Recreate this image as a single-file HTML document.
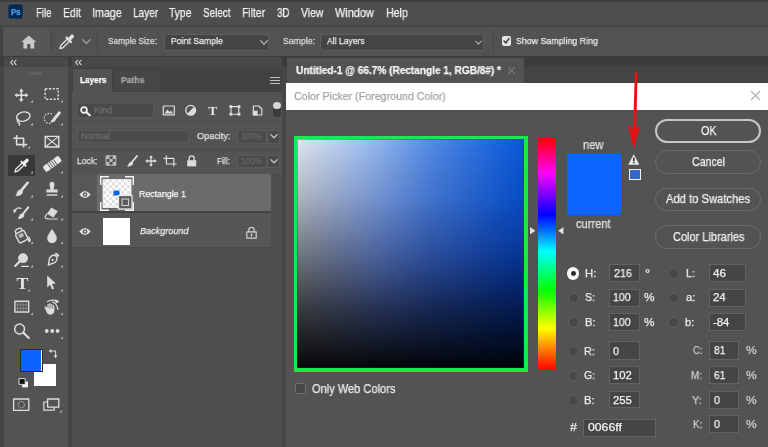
<!DOCTYPE html>
<html><head><meta charset="utf-8"><title>Color Picker</title>
<style>
*{box-sizing:border-box;margin:0;padding:0}
html,body{width:768px;height:447px;overflow:hidden;background:#535353}
body{position:relative;font-family:"Liberation Sans","DejaVu Sans",sans-serif;font-size:11px;color:#e6e6e6}
.a{position:absolute}
.t{position:absolute;white-space:nowrap;line-height:1;transform-origin:0 50%;will-change:transform;-webkit-text-stroke:0.25px}
svg{position:absolute;overflow:visible;will-change:transform}
.i{fill:none;stroke:#dedede;stroke-width:1.45;stroke-linecap:round;stroke-linejoin:round}
.f{fill:#dcdcdc;stroke:none}
</style></head><body>

<div class="a" style="left:0px;top:0px;width:768.0px;height:26.0px;background:#4e4e4e;border-top:2.5px solid #3f3f3f;"></div>
<div class="a" style="left:0px;top:25px;width:768.0px;height:2.0px;background:#454545;"></div>
<div class="a" style="left:7.8px;top:4.2px;width:15.0px;height:14.6px;background:#0a2748;border-radius:3px;border:1px solid #123a6a;"></div>
<span class="t" style="left:11.0px;top:7.7px;font-size:8.5px;color:#48a6ff;font-weight:bold;transform:scaleX(0.895);">Ps</span>
<span class="t" style="left:35.8px;top:6.8px;font-size:12.8px;color:#f2f2f2;transform:scaleX(0.752);">File</span>
<span class="t" style="left:62.5px;top:6.8px;font-size:12.8px;color:#f2f2f2;transform:scaleX(0.816);">Edit</span>
<span class="t" style="left:92.0px;top:6.8px;font-size:12.8px;color:#f2f2f2;transform:scaleX(0.838);">Image</span>
<span class="t" style="left:132.8px;top:6.8px;font-size:12.8px;color:#f2f2f2;transform:scaleX(0.787);">Layer</span>
<span class="t" style="left:169.0px;top:6.8px;font-size:12.8px;color:#f2f2f2;transform:scaleX(0.804);">Type</span>
<span class="t" style="left:203.3px;top:6.8px;font-size:12.8px;color:#f2f2f2;transform:scaleX(0.773);">Select</span>
<span class="t" style="left:242.0px;top:6.8px;font-size:12.8px;color:#f2f2f2;transform:scaleX(0.809);">Filter</span>
<span class="t" style="left:276.5px;top:6.8px;font-size:12.8px;color:#f2f2f2;transform:scaleX(0.764);">3D</span>
<span class="t" style="left:301.0px;top:6.8px;font-size:12.8px;color:#f2f2f2;transform:scaleX(0.814);">View</span>
<span class="t" style="left:334.6px;top:6.8px;font-size:12.8px;color:#f2f2f2;transform:scaleX(0.852);">Window</span>
<span class="t" style="left:386.0px;top:6.8px;font-size:12.8px;color:#f2f2f2;transform:scaleX(0.828);">Help</span>
<div class="a" style="left:0px;top:27px;width:768.0px;height:29.0px;background:#525252;"></div>
<div class="a" style="left:0px;top:27px;width:3.0px;height:29.0px;background:#424242;"></div>
<div class="a" style="left:3.5px;top:29px;width:46.5px;height:25.5px;background:#565656;border-radius:3px;"></div>
<svg style="left:21.3px;top:34.6px" width="15.6" height="14" viewBox="0 0 15 14" preserveAspectRatio="none"><path d="M7.5 0.5 L0.3 7 H2.3 V13.5 H6 V9 H9 V13.5 H12.7 V7 H14.7 Z" class="f" style="fill:#c8c8c8"/></svg>
<div class="a" style="left:50.5px;top:30px;width:1.0px;height:23.0px;background:#464646;"></div>
<svg style="left:58px;top:33px" width="18" height="17" viewBox="0 0 18 17"><path d="M2 15.5 L2.8 12.6 L9.6 5.8 L11.8 8 L5 14.8 Z" class="i" style="stroke-width:1.4"/><path d="M8.6 4.6 L13 9" class="i" style="stroke-width:2.2"/><path d="M11.2 6.4 L14.2 3.2" class="i" style="stroke-width:3.6"/></svg>
<svg style="left:82px;top:39px" width="9" height="6" viewBox="0 0 9 6"><path d="M0.8 0.8 L4.5 4.5 L8.2 0.8" class="i" style="stroke:#9a9a9a;stroke-width:1.4"/></svg>
<div class="a" style="left:97px;top:30px;width:1.0px;height:23.0px;background:#464646;"></div>
<span class="t" style="left:108.0px;top:36.4px;font-size:9.9px;color:#dedede;transform:scaleX(0.841);">Sample Size:</span>
<div class="a" style="left:163.5px;top:33.5px;width:105.5px;height:17.0px;background:#454545;border:1px solid #5e5e5e;border-radius:2px;"></div>
<span class="t" style="left:170.5px;top:36.4px;font-size:9.9px;color:#ececec;transform:scaleX(0.884);">Point Sample</span>
<svg style="left:260px;top:40px" width="8" height="6" viewBox="0 0 8 6"><path d="M0.8 0.8 L4 4.2 L7.2 0.8" class="i" style="stroke:#a8a8a8;stroke-width:1.4"/></svg>
<span class="t" style="left:282.6px;top:36.4px;font-size:9.9px;color:#dedede;transform:scaleX(0.885);">Sample:</span>
<div class="a" style="left:319.5px;top:33.5px;width:164.5px;height:17.0px;background:#454545;border:1px solid #5e5e5e;border-radius:2px;"></div>
<span class="t" style="left:327.0px;top:36.4px;font-size:9.9px;color:#ececec;transform:scaleX(0.866);">All Layers</span>
<svg style="left:475px;top:40px" width="7" height="6" viewBox="0 0 8 6"><path d="M0.8 0.8 L4 4.2 L7.2 0.8" class="i" style="stroke:#a8a8a8;stroke-width:1.4"/></svg>
<div class="a" style="left:492.5px;top:30px;width:1.0px;height:23.0px;background:#464646;"></div>
<div class="a" style="left:501.5px;top:36px;width:9.0px;height:9.5px;background:#e4e4e4;border-radius:2px;"></div>
<svg style="left:502.5px;top:37px" width="7" height="8" viewBox="0 0 7 8"><path d="M1 4 L2.8 6 L6 1.6" class="i" style="stroke:#3c3c3c;stroke-width:1.5"/></svg>
<span class="t" style="left:516.0px;top:36.4px;font-size:9.9px;color:#ececec;transform:scaleX(0.893);">Show Sampling Ring</span>
<div class="a" style="left:0px;top:56px;width:768.0px;height:391.0px;background:#464646;"></div>
<div class="a" style="left:0px;top:56px;width:768.0px;height:1.0px;background:#383838;"></div>
<div class="a" style="left:0px;top:56px;width:768.0px;height:10.0px;background:#3c3c3c;"></div>
<div class="a" style="left:286px;top:66px;width:482.0px;height:16.5px;background:#444444;"></div>
<div class="a" style="left:3.5px;top:57px;width:64.5px;height:390.0px;background:#535353;"></div>
<div class="a" style="left:3.5px;top:57px;width:64.5px;height:10.0px;background:#484848;"></div>
<svg style="left:10px;top:60px" width="7" height="5" viewBox="0 0 7 5"><path d="M2.6 0.3 L0.6 2.5 L2.6 4.7 M6 0.3 L4 2.5 L6 4.7" class="i" style="stroke:#e0e0e0;stroke-width:1.1"/></svg>
<div class="a" style="left:29px;top:71.5px;width:13.0px;height:3.5px;background:#5e5e5e;"></div>
<div class="a" style="left:7.5px;top:154.5px;width:27.5px;height:21.5px;background:#383838;"></div>
<svg style="left:0;top:0" width="72" height="447" viewBox="0 0 72 447">
<g class="i">
<!-- move -->
<path d="M21.3 90 V100.8 M15.6 95.3 H27 " style="stroke-width:1.5"/>
<path class="f" d="M21.3 88.6 L23.6 91.6 H19 Z M21.3 102 L23.6 99 H19 Z M14.4 95.3 L17.4 93 V97.6 Z M28.4 95.3 L25.4 93 V97.6 Z"/>
<!-- marquee -->
<rect x="45.2" y="88.8" width="13" height="10.4" style="stroke-dasharray:2.2 1.5;stroke-linecap:butt;stroke-width:1.4"/>
<!-- lasso -->
<ellipse cx="23.3" cy="116.6" rx="6.8" ry="4.6" transform="rotate(-12 23.3 116.6)" style="stroke-width:1.4"/>
<path d="M18.2 119.6 Q16.4 121.3 18.6 122.6 Q20.2 123.6 19.2 125"/>
<!-- quick select -->
<path d="M50.5 123.2 A5 5 0 1 1 52 114.2" style="stroke-dasharray:1.6 1.4;stroke-width:1.2;stroke-linecap:butt"/>
<path d="M59.4 112.8 L54.6 118.4" style="stroke-width:3"/>
<path class="f" d="M54.6 118.2 Q51.4 118.6 50.6 122.6 Q54.6 122.8 56 119.6 Z"/>
<!-- crop -->
<path d="M16.6 135 V144.6 H27.2 M13.2 138.2 H23.6 V147.6" style="stroke-width:1.6;stroke-linecap:butt"/>
<!-- frame -->
<rect x="45.2" y="136.4" width="13.6" height="10.6" style="stroke-width:1.4"/>
<path d="M45.2 136.4 L58.8 147 M58.8 136.4 L45.2 147" style="stroke-width:1.1"/>
<!-- eyedropper (selected) -->
<path d="M15 172 L15.8 169.2 L22.4 162.6 L24.4 164.6 L17.8 171.2 Z" style="stroke-width:1.3;stroke:#f0f0f0"/>
<path d="M21.4 161.6 L25.6 165.8" style="stroke-width:2;stroke:#f0f0f0"/>
<path d="M24 163.2 L27 160.4" style="stroke-width:3.4;stroke:#f0f0f0"/>
<!-- healing -->
<g transform="rotate(-36 52.2 164)"><rect x="42.600" y="160.600" width="19.400" height="6.800" rx="1.800" class="f" style="fill:#e6e6e6"/><path d="M48.600 160.600 V167.400 M51 160.600 V167.400 M53.400 160.600 V167.400 M55.800 160.600 V167.400" style="stroke:#555;stroke-width:0.900;stroke-linecap:butt"/></g>
<!-- brush -->
<path d="M27.600 182.800 L21.400 190.400" style="stroke-width:2.600"/>
<path class="f" d="M20.8 189.6 Q17.4 190 16.8 193.2 Q16.4 194.8 15.2 195.6 Q19.8 196.8 22.4 193.4 Q23.4 191.6 22.6 190.6 Z"/>
<!-- stamp -->
<path class="f" d="M49.6 185 A2.5 2.5 0 1 1 54.4 185 L53.6 189.6 H57.6 V192.6 H46.4 V189.6 H50.4 Z"/>
<path d="M46.6 195 H57.4" style="stroke-width:1.4;stroke-linecap:butt"/>
<!-- history brush -->
<path d="M28.2 207.4 L23 213.8" style="stroke-width:2"/>
<path class="f" d="M22.6 213.2 Q19.6 213.6 19 216.2 Q18.6 217.8 17.4 218.6 Q21.4 219.8 23.8 216.8 Q24.8 215 24 214 Z"/>
<path d="M14.4 211.6 A4.6 4.6 0 0 1 21 208.4" style="stroke-width:1.2"/>
<path class="f" d="M13.2 209.6 L16.6 210.6 L14 213.4 Z"/>
<!-- eraser -->
<path class="f" d="M51.4 207.6 L57.8 211.2 L53.4 217.4 L47 213.8 Z"/>
<path d="M47 213.8 L45.2 216.6 Q45 218.8 48 219 H57.4" style="stroke-width:1.2"/>
<!-- bucket -->
<g transform="rotate(-28 22 236)"><rect x="16.6" y="231.4" width="9.6" height="10" rx="1.6" style="stroke-width:1.4"/><path d="M18 231.4 V228.6 Q21.4 226.6 24.8 228.6 V231.4" style="stroke-width:1.2"/><rect x="19" y="233.4" width="4.8" height="3.6" class="f" style="fill:#bdbdbd"/></g>
<path class="f" d="M28.6 236 Q31.4 239.4 30.6 241.4 Q29.4 242.8 28 241.4 Q27.4 239.6 28.6 236 Z"/>
<!-- blur drop -->
<path class="f" d="M52 229 Q56.8 235.6 56.8 238.4 A4.8 4.8 0 0 1 47.200 238.400 Q47.2 235.600 52 229 Z"/>
<!-- dodge -->
<circle cx="23" cy="258.2" r="4.900" class="f"/>
<path d="M19.4 261.8 L15.200 266" style="stroke-width:2.2"/>
<path d="M21.600 266.400 H28.400" style="stroke-width:1.100"/>
<!-- pen -->
<g transform="rotate(40 52.5 260)"><path d="M52.500 266.500 L48.900 260.200 Q48.700 256.800 50.700 255 H54.300 Q56.300 256.800 56.100 260.200 Z" style="stroke-width:1.400"/><path d="M50.300 253 H54.700" style="stroke-width:2.200;stroke-linecap:butt"/><circle cx="52.500" cy="259.800" r="1.100" class="f"/></g>
<!-- path select arrow -->
<path class="f" d="M47.200 275.600 V287.400 L50 284.800 L52.200 289.400 L54.200 288.400 L52 284 L55.800 283.600 Z"/>
<!-- rectangle tool -->
<rect x="14.900" y="301.200" width="13.800" height="10.800" style="stroke-width:1.400"/>
<path d="M17.600 301.200 V312 M20.400 301.200 V312 M23.200 301.200 V312 M26 301.200 V312 M14.900 304.800 H28.700 M14.900 308.400 H28.700" style="stroke-width:0.500;stroke:#a8a8a8"/>
<!-- hand -->
<path class="f" d="M45.4 309.2 Q43.800 307.200 45 306.600 Q46.200 306.200 47.400 308 V304.600 Q48 303.400 49 304.600 V303.800 Q49.800 302.800 50.800 303.800 V304.200 Q51.600 303.400 52.600 304.400 V305.200 Q53.600 304.600 54.400 305.800 V310.600 Q54.200 314.400 50.600 314.800 Q47.600 314.800 46.600 312 Z"/>
<path d="M49 305 V308 M50.800 304.600 V308 M52.600 305.200 V308" style="stroke:#535353;stroke-width:0.600"/>
<path d="M47.600 301.600 Q52 298.800 56.400 301" style="stroke-width:1.200"/>
<path d="M52.600 302 Q57 303.400 57.800 309.400" style="stroke-width:1.300"/>
<path class="f" d="M55.400 299.200 L59.600 301.400 L55.600 303.400 Z"/>
<!-- zoom -->
<circle cx="19.600" cy="329" r="4.900" style="stroke-width:1.500"/>
<path d="M23.400 332.800 L28.800 338" style="stroke-width:2.200"/>
<!-- dots -->
<circle cx="46.800" cy="331" r="1.900" class="f"/><circle cx="52.200" cy="331" r="1.900" class="f"/><circle cx="57.600" cy="331" r="1.900" class="f"/>
<!-- swap -->
<path d="M51 351 H55.600 V356.400" style="stroke-width:1.100"/>
<path class="f" d="M48.600 351 L51.400 349 V353 Z M55.600 358.200 L53.600 355.400 H57.600 Z"/>
<!-- default colours -->
<rect x="22.200" y="381.600" width="5.800" height="5.800" fill="#f4f4f4" stroke="none"/>
<rect x="19.400" y="378.600" width="5.800" height="5.800" fill="#111" stroke="#e8e8e8" stroke-width="0.900"/>
<!-- quick mask -->
<rect x="13.600" y="399" width="15.200" height="11.400" style="stroke-width:1.300"/>
<circle cx="21.200" cy="404.700" r="3.200" style="stroke-width:1;stroke-dasharray:1.300 1.100;stroke-linecap:butt"/>
<!-- screen mode -->
<rect x="43.800" y="402" width="10.400" height="8.200" style="stroke-width:1.200"/>
<rect x="47.600" y="399" width="11.200" height="8.200" fill="#535353" style="fill:#535353;stroke-width:1.300"/>
</g>
<!-- type T -->
<text x="16.400" y="289.400" font-family="Liberation Serif, serif" font-size="17" font-weight="bold" fill="#e4e4e4" transform="translate(16.400 0) scale(1.050 1) translate(-16.400 0)">T</text>
<!-- corner triangles -->
<g fill="#b4b4b4">
<path d="M33 100 V102.600 H30.400 Z M63 100 V102.600 H60.400 Z M33 123 V125.600 H30.400 Z M63 123 V125.600 H60.400 Z M30 146 V148.600 H27.400 Z
M33 171 V173.600 H30.400 Z M63 171 V173.600 H60.400 Z M33 195 V197.600 H30.400 Z M63 195 V197.600 H60.400 Z M33 218 V220.600 H30.400 Z M63 218 V220.600 H60.400 Z
M33 241.500 V244.100 H30.400 Z M63 241.500 V244.100 H60.400 Z M33 265 V267.600 H30.400 Z M63 265 V267.600 H60.400 Z M30 289 V291.600 H27.400 Z M63 289 V291.600 H60.400 Z
M33 312.500 V315.100 H30.400 Z M63 312.500 V315.100 H60.400 Z M63 336.500 V339.100 H60.400 Z M62 410 V412.600 H59.400 Z"/>
</g>
</svg>

<div class="a" style="left:33.8px;top:364px;width:22.2px;height:22.0px;background:#fff;"></div>
<div class="a" style="left:19.5px;top:349px;width:23.0px;height:23.0px;background:#fff;border:1px solid #2a2a2a;"></div>
<div class="a" style="left:20.8px;top:350.3px;width:20.4px;height:20.4px;background:#0c64ff;"></div>
<div class="a" style="left:72px;top:57px;width:210.0px;height:390.0px;background:#535353;"></div>
<div class="a" style="left:72px;top:57px;width:210.0px;height:10.0px;background:#484848;"></div>
<svg style="left:75px;top:60px" width="7" height="5" viewBox="0 0 7 5"><path d="M2.6 0.3 L0.6 2.5 L2.6 4.7 M6 0.3 L4 2.5 L6 4.7" class="i" style="stroke:#e0e0e0;stroke-width:1.1"/></svg>
<div class="a" style="left:72px;top:67px;width:210.0px;height:25.0px;background:#424242;"></div>
<div class="a" style="left:73px;top:69px;width:38.5px;height:23.0px;background:#535353;"></div>
<div class="a" style="left:113.5px;top:70px;width:46.5px;height:21.0px;background:#474747;"></div>
<span class="t" style="left:79.5px;top:75.0px;font-size:9.9px;color:#fff;font-weight:bold;transform:scaleX(0.831);">Layers</span>
<span class="t" style="left:121.0px;top:75.0px;font-size:9.9px;color:#a4a4a4;font-weight:bold;transform:scaleX(0.873);">Paths</span>
<div class="a" style="left:270px;top:76.5px;width:9.7px;height:1.3px;background:#bdbdbd;box-shadow:0 3px 0 #bdbdbd,0 6px 0 #bdbdbd;"></div>
<div class="a" style="left:76.5px;top:102.5px;width:77.0px;height:15.0px;background:#494949;border:1px solid #575757;"></div>
<svg style="left:80px;top:105.5px" width="11" height="10" viewBox="0 0 11 10"><circle cx="4" cy="4" r="2.9" class="i" style="stroke:#f0f0f0;stroke-width:1.7"/><path d="M6.4 6.2 L9.8 9.2" class="i" style="stroke:#f0f0f0;stroke-width:2.2"/></svg>
<span class="t" style="left:94.0px;top:105.4px;font-size:9.9px;color:#707070;transform:scaleX(0.909);">Kind</span>
<svg style="left:0;top:0" width="290" height="250" viewBox="0 0 290 250">
<g class="i">
<!-- filter: image -->
<rect x="163.300" y="106" width="11" height="8.800" style="stroke-width:1.200"/>
<path class="f" d="M164.600 113.400 L167.400 109.600 L169.400 112 L171 110.400 L173.200 113.400 Z"/>
<!-- adjustment circle -->
<circle cx="190.700" cy="110.300" r="4.900" style="stroke-width:1.300"/>
<path class="f" d="M187.200 113.800 A4.900 4.900 0 0 0 194.200 106.800 Z"/>
<!-- transform box -->
<rect x="231" y="106.600" width="7.800" height="7.600" style="stroke-width:1.100"/>
<rect x="229.400" y="105.200" width="2.800" height="2.800" class="f"/><rect x="237.600" y="105.200" width="2.800" height="2.800" class="f"/><rect x="229.400" y="112.800" width="2.800" height="2.800" class="f"/><rect x="237.600" y="112.800" width="2.800" height="2.800" class="f"/>
<!-- smart object -->
<path d="M253.400 115 V106 H258.800 L261.800 109 V115 Z" style="stroke-width:1.200"/>
<rect x="252.800" y="110.800" width="4.800" height="4.600" class="f"/>
<!-- lock: transparent pixels -->
<rect x="106.400" y="155.800" width="9.400" height="9.400" style="stroke-width:1;stroke:#bdbdbd"/>
<path class="f" style="fill:#bdbdbd" d="M106.400 155.800 h3.100 v3.100 h-3.100 Z M112.700 155.800 h3.100 v3.100 h-3.100 Z M109.500 158.900 h3.200 v3.200 h-3.200 Z M106.400 162.100 h3.100 v3.100 h-3.100 Z M112.700 162.100 h3.100 v3.100 h-3.100 Z"/>
<!-- lock: brush -->
<path d="M137 156 L132 162" style="stroke-width:1.800"/>
<path class="f" d="M131.600 161.400 Q128.800 161.800 128.400 164.200 Q128.200 165.400 127 166.200 Q130.800 167 132.800 164.400 Q133.600 163 132.800 162.200 Z"/>
<!-- lock: move -->
<path d="M151 156.600 V165.400 M146.600 161 H155.400" style="stroke-width:1.300"/>
<path class="f" d="M151 155.200 L153 157.800 H149 Z M151 166.800 L153 164.200 H149 Z M145.200 161 L147.800 159 V163 Z M156.800 161 L154.200 159 V163 Z"/>
<!-- lock: artboard -->
<path d="M166.400 155.600 V164 H176.600 M163.600 158.400 H173.800 V166.600" style="stroke-width:1.200;stroke-linecap:butt"/>
<!-- lock: all -->
<rect x="187.200" y="160.200" width="9" height="6.200" class="f"/>
<path d="M189.200 160 V158.400 A2.500 2.500 0 0 1 194.200 158.400 V160" style="stroke-width:1.300"/>
</g>
<text x="208.200" y="115.200" font-family="Liberation Serif, serif" font-size="13.5" font-weight="bold" fill="#e4e4e4">T</text>
</svg>

<div class="a" style="left:273px;top:102px;width:8.0px;height:15.0px;background:#3c3c3c;border-radius:3px;"></div>
<div class="a" style="left:273.3px;top:102px;width:7.4px;height:7.2px;background:#d8d8d8;border-radius:50%;"></div>
<div class="a" style="left:72px;top:121px;width:210.0px;height:1.0px;background:#4a4a4a;"></div>
<div class="a" style="left:76.5px;top:129.5px;width:112.5px;height:13.5px;background:#4c4c4c;border:1px solid #595959;"></div>
<span class="t" style="left:80.8px;top:130.8px;font-size:9.9px;color:#6e6e6e;transform:scaleX(0.904);">Normal</span>
<span class="t" style="left:197.0px;top:130.8px;font-size:9.9px;color:#e0e0e0;transform:scaleX(0.923);">Opacity:</span>
<div class="a" style="left:236.5px;top:129.5px;width:30.0px;height:14.0px;background:#4a4a4a;border:1px solid #5a5a5a;"></div>
<span class="t" style="left:241.0px;top:131.0px;font-size:9.6px;color:#686868;transform:scaleX(0.856);">100%</span>
<div class="a" style="left:267px;top:129.5px;width:13.0px;height:14.0px;background:#4a4a4a;border:1px solid #5a5a5a;"></div>
<svg style="left:269.5px;top:134px" width="8" height="5" viewBox="0 0 8 5"><path d="M0.8 0.6 L4 3.8 L7.2 0.6" class="i" style="stroke:#c8c8c8;stroke-width:1.3"/></svg>
<div class="a" style="left:72px;top:149px;width:210.0px;height:1.0px;background:#494949;"></div>
<span class="t" style="left:76.5px;top:156.2px;font-size:9.9px;color:#e0e0e0;transform:scaleX(0.867);">Lock:</span>
<span class="t" style="left:217.0px;top:156.2px;font-size:9.9px;color:#e0e0e0;transform:scaleX(0.845);">Fill:</span>
<div class="a" style="left:236.5px;top:154.5px;width:30.0px;height:13.5px;background:#4a4a4a;border:1px solid #5a5a5a;"></div>
<span class="t" style="left:241.0px;top:156.2px;font-size:9.6px;color:#686868;transform:scaleX(0.856);">100%</span>
<div class="a" style="left:267px;top:154.5px;width:13.0px;height:13.5px;background:#4a4a4a;border:1px solid #5a5a5a;"></div>
<svg style="left:269.5px;top:159px" width="8" height="5" viewBox="0 0 8 5"><path d="M0.8 0.6 L4 3.8 L7.2 0.6" class="i" style="stroke:#c8c8c8;stroke-width:1.3"/></svg>
<div class="a" style="left:72px;top:174px;width:199.0px;height:37.0px;background:#575757;"></div>
<div class="a" style="left:97px;top:174px;width:174.0px;height:37.0px;background:#6b6b6b;"></div>
<div class="a" style="left:72px;top:211px;width:199.0px;height:1.5px;background:#434343;"></div>
<div class="a" style="left:72px;top:212.5px;width:199.0px;height:34.5px;background:#565656;"></div>
<div class="a" style="left:72px;top:247px;width:199.0px;height:1.0px;background:#494949;"></div>
<div class="a" style="left:72px;top:248px;width:199.0px;height:199.0px;background:#4f4f4f;"></div>
<div class="a" style="left:271px;top:174px;width:11.0px;height:273.0px;background:#4e4e4e;"></div>
<svg style="left:79px;top:189.5px" width="12" height="9" viewBox="0 0 12 9"><path d="M0.3 4.5 Q6 -2.5 11.7 4.5 Q6 11.5 0.3 4.5 Z" class="f" style="fill:#e4e4e4"/><circle cx="6" cy="4.5" r="2.3" fill="#555"/><circle cx="6" cy="4.5" r="1" fill="#e4e4e4"/></svg>
<svg style="left:79px;top:227px" width="12" height="9" viewBox="0 0 12 9"><path d="M0.3 4.5 Q6 -2.5 11.7 4.5 Q6 11.5 0.3 4.5 Z" class="f" style="fill:#e4e4e4"/><circle cx="6" cy="4.5" r="2.3" fill="#555"/><circle cx="6" cy="4.5" r="1" fill="#e4e4e4"/></svg>
<svg style="left:100px;top:176px" width="34" height="35" viewBox="0 0 34 35">
<defs><pattern id="ck" width="6" height="6" patternUnits="userSpaceOnUse"><rect width="6" height="6" fill="#fff"/><rect width="3" height="3" fill="#e0e0e0"/><rect x="3" y="3" width="3" height="3" fill="#e0e0e0"/></pattern></defs>
<rect x="3" y="3.5" width="28" height="28" fill="url(#ck)"/>
<path d="M0.7 9 V0.7 H9 M25 0.7 H33.3 V9 M33.3 26 V34.3 H25 M9 34.3 H0.7 V26" fill="none" stroke="#f4f4f4" stroke-width="1.4"/>
<path d="M3 3.5 H31 V31.5 H3 Z" fill="none" stroke="#f0f0f0" stroke-width="0.9"/>
<rect x="13.3" y="14.5" width="6.3" height="5" rx="1.5" fill="#0a62f5"/>
<rect x="18.5" y="19.5" width="13.5" height="13.5" fill="#5a5a5a" stroke="#e6e6e6" stroke-width="1.3"/>
<rect x="22" y="23" width="6.5" height="6.5" fill="none" stroke="#cfcfcf" stroke-width="1.1"/>
</svg>
<span class="t" style="left:139.0px;top:189.0px;font-size:9.9px;color:#fafafa;transform:scaleX(0.890);">Rectangle 1</span>
<div class="a" style="left:102.6px;top:218px;width:27.4px;height:26.7px;background:#fff;"></div>
<span class="t" style="left:140.0px;top:226.1px;font-size:9.9px;color:#efefef;font-style:italic;transform:scaleX(0.919);">Background</span>
<svg style="left:245.5px;top:226.5px" width="11" height="12" viewBox="0 0 11 12"><rect x="0.8" y="4.8" width="9.4" height="6.4" class="i" style="stroke:#cfcfcf;stroke-width:1.2"/><path d="M2.8 4.8 V3 A2.7 2.7 0 0 1 8.2 3 V4.8" class="i" style="stroke:#cfcfcf;stroke-width:1.2"/><path d="M5.5 7 V9" class="i" style="stroke:#cfcfcf;stroke-width:1.4"/></svg>
<div class="a" style="left:287px;top:58px;width:237.0px;height:24.5px;background:#535353;"></div>
<span class="t" style="left:296.0px;top:65.5px;font-size:10.3px;color:#f6f6f6;font-weight:bold;transform:scaleX(0.977);">Untitled-1 @ 66.7% (Rectangle 1, RGB/8#) *</span>
<svg style="left:508px;top:66.5px" width="7" height="7" viewBox="0 0 7 7"><path d="M0.5 0.5 L6.5 6.5 M6.5 0.5 L0.5 6.5" class="i" style="stroke:#8c8c8c;stroke-width:1"/></svg>
<div class="a" style="left:286px;top:82.5px;width:482.0px;height:364.5px;background:#535353;"></div>
<div class="a" style="left:285.5px;top:82.5px;width:482.5px;height:27.5px;background:#fff;"></div>
<span class="t" style="left:293.5px;top:90.9px;font-size:11.5px;color:#a2a2a2;transform:scaleX(0.928);">Color Picker (Foreground Color)</span>
<svg style="left:751px;top:91px" width="9" height="9" viewBox="0 0 9 9"><path d="M0.4 0.4 L8.6 8.6 M8.6 0.4 L0.4 8.6" class="i" style="stroke:#a4a4a4;stroke-width:1.1"/></svg>
<div class="a" style="left:293.6px;top:135.9px;width:234.2px;height:236.0px;background:#14ec4a;"></div>
<div class="a" style="left:297.1px;top:139.4px;width:227.3px;height:229px;background:linear-gradient(to bottom,rgba(0,0,0,0.03) 0%,rgba(0,0,0,0.24) 25%,rgba(0,0,0,0.5) 50%,rgba(0,0,0,0.76) 75%,rgba(0,0,0,0.97) 100%),linear-gradient(to right,rgb(232,238,250) 0%,rgb(165,197,250) 30%,rgb(84,142,240) 60%,rgb(24,102,232) 90%,rgb(10,90,224) 100%);box-shadow:inset 0 0 0 1px rgba(40,50,80,0.35)"></div>
<div class="a" style="left:297.1px;top:139.4px;width:227.3px;height:229px;mix-blend-mode:screen;background:linear-gradient(to right,rgba(0,36,255,0) 0%,rgba(0,36,255,1) 38%,rgba(0,36,255,1) 100%);-webkit-mask-image:linear-gradient(to bottom,rgba(0,0,0,0) 0%,rgba(0,0,0,.3) 25%,rgba(0,0,0,.26) 50%,rgba(0,0,0,.11) 75%,rgba(0,0,0,0) 100%);mask-image:linear-gradient(to bottom,rgba(0,0,0,0) 0%,rgba(0,0,0,.3) 25%,rgba(0,0,0,.26) 50%,rgba(0,0,0,.11) 75%,rgba(0,0,0,0) 100%)"></div>
<div class="a" style="left:538px;top:138px;width:17.5px;height:232.4px;background:linear-gradient(to bottom,#f00 0%,#f0f 15.2%,#00f 33%,#0ff 48.8%,#0f0 65.6%,#ff0 82%,#f00 100%)"></div>
<svg style="left:530px;top:227.3px" width="5.5" height="7.5" viewBox="0 0 5.5 7.5"><path d="M0 0 L5.5 3.75 L0 7.5 Z" fill="#e2e2e2" stroke="#3a3a3a" stroke-width="0.8" paint-order="stroke"/></svg>
<svg style="left:557.7px;top:227.3px" width="5.5" height="7.5" viewBox="0 0 5.5 7.5"><path d="M5.5 0 L0 3.75 L5.5 7.5 Z" fill="#e2e2e2" stroke="#3a3a3a" stroke-width="0.8" paint-order="stroke"/></svg>
<span class="t" style="left:582.8px;top:139.0px;font-size:12px;color:#e2e2e2;transform:scaleX(0.931);">new</span>
<div class="a" style="left:566.5px;top:153.2px;width:54.5px;height:62.0px;background:#0a66ff;"></div>
<span class="t" style="left:575.8px;top:217.5px;font-size:12px;color:#e2e2e2;transform:scaleX(0.924);">current</span>
<svg style="left:628.4px;top:154px" width="11.6" height="11" viewBox="0 0 11.6 11"><path d="M5.8 0.3 L11.4 10.7 H0.2 Z" fill="#ededed"/><path d="M5.8 3.6 V7.2 M5.8 8.3 V9.6" stroke="#383838" stroke-width="1.7" fill="none"/></svg>
<div class="a" style="left:629.3px;top:168.6px;width:11.4px;height:11.4px;background:#3467cc;border:1.2px solid #f0f0f0;"></div>
<svg style="left:620px;top:70px" width="30" height="85" viewBox="0 0 30 85"><path d="M16.2 2.5 L14.6 62" stroke="#e51212" stroke-width="2.9" fill="none"/><path d="M8.2 55 L13.8 77.5 L19.8 55.5 L14.2 61 Z" fill="#e51212" stroke="#e51212" stroke-width="0.8" stroke-linejoin="round"/></svg>
<div class="a" style="left:655.2px;top:118.8px;width:105.8px;height:24.0px;background:transparent;border:2px solid #c6c6c6;border-radius:13px;"></div>
<span class="t" style="left:700.7px;top:125.4px;font-size:12.3px;color:#f2f2f2;transform:scaleX(0.878);">OK</span>
<div class="a" style="left:655.2px;top:150px;width:105.8px;height:23.8px;background:transparent;border:1.3px solid #6c6c6c;border-radius:13px;"></div>
<span class="t" style="left:691.7px;top:156.0px;font-size:12.3px;color:#f2f2f2;transform:scaleX(0.862);">Cancel</span>
<div class="a" style="left:655.2px;top:187.8px;width:105.8px;height:23.2px;background:transparent;border:1.3px solid #6c6c6c;border-radius:13px;"></div>
<span class="t" style="left:666.2px;top:193.4px;font-size:12.3px;color:#f2f2f2;transform:scaleX(0.911);">Add to Swatches</span>
<div class="a" style="left:655.2px;top:225.3px;width:105.8px;height:23.5px;background:transparent;border:1.3px solid #6c6c6c;border-radius:13px;"></div>
<span class="t" style="left:672.7px;top:231.2px;font-size:12.3px;color:#f2f2f2;transform:scaleX(0.894);">Color Libraries</span>
<div class="a" style="left:295px;top:382.6px;width:11.3px;height:11.8px;background:#484848;border:1px solid #707070;border-radius:2px;"></div>
<span class="t" style="left:312.0px;top:382.6px;font-size:12px;color:#ececec;transform:scaleX(0.921);">Only Web Colors</span>
<div class="a" style="left:567.0999999999999px;top:267.2px;width:12.4px;height:12.4px;background:#f4f4f4;border-radius:50%;"></div>
<div class="a" style="left:570.9px;top:271.0px;width:4.8px;height:4.8px;background:#2c2c2c;border-radius:50%;"></div>
<span class="t" style="left:584.5px;top:267.6px;font-size:11.3px;color:#ececec;transform:scaleX(1.000);">H:</span>
<div class="a" style="left:608.5px;top:264px;width:31.0px;height:18.0px;background:#454545;border:1px solid #626262;"></div>
<span class="t" style="left:614.0px;top:267.6px;font-size:11.3px;color:#f4f4f4;transform:scaleX(0.955);">216</span>
<span class="t" style="left:645.3px;top:268.1px;font-size:11.3px;color:#ececec;transform:scaleX(1.151);">°</span>
<div class="a" style="left:567.9px;top:292.6px;width:10.8px;height:10.8px;background:#484848;border-radius:50%;border:1.2px solid #606060;"></div>
<span class="t" style="left:584.5px;top:292.2px;font-size:11.3px;color:#ececec;transform:scaleX(0.946);">S:</span>
<div class="a" style="left:608.5px;top:289px;width:31.0px;height:17.5px;background:#454545;border:1px solid #626262;"></div>
<span class="t" style="left:612.7px;top:292.2px;font-size:11.3px;color:#f4f4f4;transform:scaleX(0.939);">100</span>
<span class="t" style="left:643.5px;top:292.2px;font-size:11.3px;color:#ececec;transform:scaleX(1.045);">%</span>
<div class="a" style="left:567.9px;top:317.3px;width:10.8px;height:10.8px;background:#484848;border-radius:50%;border:1.2px solid #606060;"></div>
<span class="t" style="left:584.5px;top:316.9px;font-size:11.3px;color:#ececec;transform:scaleX(0.984);">B:</span>
<div class="a" style="left:608.5px;top:313px;width:31.0px;height:18.0px;background:#454545;border:1px solid #626262;"></div>
<span class="t" style="left:612.7px;top:316.9px;font-size:11.3px;color:#f4f4f4;transform:scaleX(0.939);">100</span>
<span class="t" style="left:643.5px;top:316.9px;font-size:11.3px;color:#ececec;transform:scaleX(1.045);">%</span>
<div class="a" style="left:567.9px;top:346.0px;width:10.8px;height:10.8px;background:#484848;border-radius:50%;border:1.2px solid #606060;"></div>
<span class="t" style="left:584.3px;top:345.6px;font-size:11.3px;color:#ececec;transform:scaleX(0.947);">R:</span>
<div class="a" style="left:608.5px;top:341.3px;width:31.0px;height:18.7px;background:#454545;border:1px solid #626262;"></div>
<span class="t" style="left:613.0px;top:345.6px;font-size:11.3px;color:#f4f4f4;transform:scaleX(0.955);">0</span>
<div class="a" style="left:567.9px;top:370.5px;width:10.8px;height:10.8px;background:#484848;border-radius:50%;border:1.2px solid #606060;"></div>
<span class="t" style="left:584.3px;top:370.1px;font-size:11.3px;color:#ececec;transform:scaleX(0.939);">G:</span>
<div class="a" style="left:608.5px;top:365.5px;width:31.0px;height:18.5px;background:#454545;border:1px solid #626262;"></div>
<span class="t" style="left:612.6px;top:370.1px;font-size:11.3px;color:#f4f4f4;transform:scaleX(0.997);">102</span>
<div class="a" style="left:567.9px;top:395.0px;width:10.8px;height:10.8px;background:#484848;border-radius:50%;border:1.2px solid #606060;"></div>
<span class="t" style="left:584.3px;top:394.6px;font-size:11.3px;color:#ececec;transform:scaleX(1.002);">B:</span>
<div class="a" style="left:608.5px;top:390.6px;width:31.0px;height:17.9px;background:#454545;border:1px solid #626262;"></div>
<span class="t" style="left:612.6px;top:394.6px;font-size:11.3px;color:#f4f4f4;transform:scaleX(0.997);">255</span>
<span class="t" style="left:570.0px;top:422.1px;font-size:11.3px;color:#ececec;transform:scaleX(1.114);">#</span>
<div class="a" style="left:583px;top:419px;width:72.7px;height:18.3px;background:#454545;border:1px solid #626262;"></div>
<span class="t" style="left:587.6px;top:422.1px;font-size:11.3px;color:#f4f4f4;transform:scaleX(1.083);">0066ff</span>
<div class="a" style="left:667.9px;top:268.0px;width:10.8px;height:10.8px;background:#484848;border-radius:50%;border:1.2px solid #606060;"></div>
<span class="t" style="left:685.7px;top:267.6px;font-size:11.3px;color:#ececec;transform:scaleX(0.945);">L:</span>
<div class="a" style="left:709px;top:264px;width:37.0px;height:18.0px;background:#454545;border:1px solid #626262;"></div>
<span class="t" style="left:713.3px;top:267.6px;font-size:11.3px;color:#f4f4f4;transform:scaleX(1.043);">46</span>
<div class="a" style="left:667.9px;top:292.6px;width:10.8px;height:10.8px;background:#484848;border-radius:50%;border:1.2px solid #606060;"></div>
<span class="t" style="left:685.7px;top:292.2px;font-size:11.3px;color:#ececec;transform:scaleX(0.987);">a:</span>
<div class="a" style="left:709px;top:289px;width:37.0px;height:17.5px;background:#454545;border:1px solid #626262;"></div>
<span class="t" style="left:713.3px;top:292.2px;font-size:11.3px;color:#f4f4f4;transform:scaleX(1.011);">24</span>
<div class="a" style="left:667.9px;top:317.3px;width:10.8px;height:10.8px;background:#484848;border-radius:50%;border:1.2px solid #606060;"></div>
<span class="t" style="left:685.3px;top:316.9px;font-size:11.3px;color:#ececec;transform:scaleX(0.987);">b:</span>
<div class="a" style="left:709px;top:313px;width:37.0px;height:18.0px;background:#454545;border:1px solid #626262;"></div>
<span class="t" style="left:713.0px;top:316.9px;font-size:11.3px;color:#f4f4f4;transform:scaleX(1.004);">-84</span>
<span class="t" style="left:692.8px;top:345.2px;font-size:11.3px;color:#cdcdcd;transform:scaleX(0.814);">C:</span>
<div class="a" style="left:709px;top:341.3px;width:29.7px;height:18.7px;background:#454545;border:1px solid #626262;"></div>
<span class="t" style="left:713.6px;top:345.2px;font-size:11.3px;color:#f4f4f4;transform:scaleX(0.907);">81</span>
<span class="t" style="left:745.5px;top:345.2px;font-size:11.3px;color:#cdcdcd;transform:scaleX(1.065);">%</span>
<span class="t" style="left:691.0px;top:369.9px;font-size:11.3px;color:#cdcdcd;transform:scaleX(0.877);">M:</span>
<div class="a" style="left:709px;top:365.6px;width:29.7px;height:18.4px;background:#454545;border:1px solid #626262;"></div>
<span class="t" style="left:713.6px;top:369.9px;font-size:11.3px;color:#f4f4f4;transform:scaleX(0.907);">61</span>
<span class="t" style="left:745.5px;top:369.9px;font-size:11.3px;color:#cdcdcd;transform:scaleX(1.065);">%</span>
<span class="t" style="left:692.0px;top:394.6px;font-size:11.3px;color:#cdcdcd;transform:scaleX(0.955);">Y:</span>
<div class="a" style="left:709px;top:390.6px;width:29.7px;height:18.4px;background:#454545;border:1px solid #626262;"></div>
<span class="t" style="left:713.6px;top:394.6px;font-size:11.3px;color:#f4f4f4;transform:scaleX(0.955);">0</span>
<span class="t" style="left:745.5px;top:394.6px;font-size:11.3px;color:#cdcdcd;transform:scaleX(1.065);">%</span>
<span class="t" style="left:692.6px;top:418.8px;font-size:11.3px;color:#cdcdcd;transform:scaleX(0.881);">K:</span>
<div class="a" style="left:709px;top:414.7px;width:29.7px;height:18.0px;background:#454545;border:1px solid #626262;"></div>
<span class="t" style="left:713.6px;top:418.8px;font-size:11.3px;color:#f4f4f4;transform:scaleX(0.955);">0</span>
<span class="t" style="left:745.5px;top:418.8px;font-size:11.3px;color:#cdcdcd;transform:scaleX(1.065);">%</span>
</body></html>
